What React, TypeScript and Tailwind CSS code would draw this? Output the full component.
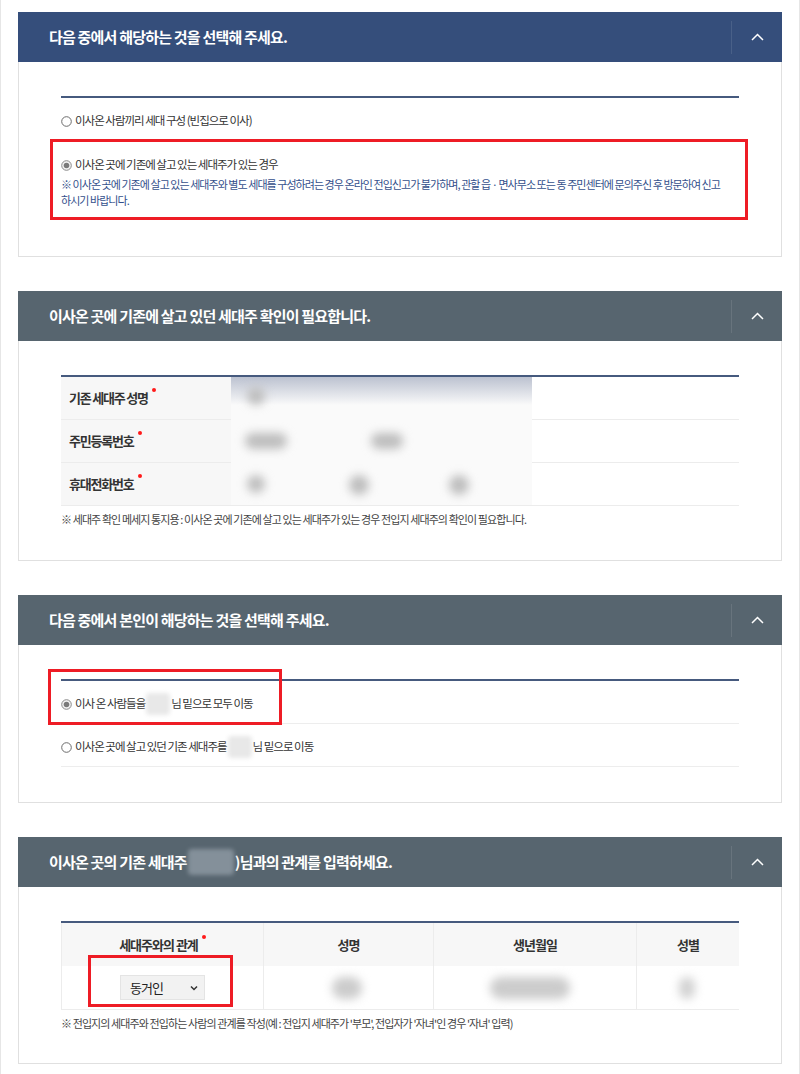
import type { ReactNode } from "react";

const NAVY = "bg-[#354e7b]";
const SLATE = "bg-[#57656f]";

function Chevron() {
  return (
    <svg width="13" height="8" viewBox="0 0 13 8" fill="none">
      <path d="M1 7L6.5 1.5L12 7" stroke="white" strokeWidth="1.5" />
    </svg>
  );
}

function Panel({
  title,
  tone,
  children,
  className = "",
}: {
  title: ReactNode;
  tone: string;
  children: ReactNode;
  className?: string;
}) {
  return (
    <section>
      <header className={`flex h-[50px] items-center ${tone}`}>
        <h2 className="flex flex-1 items-center pl-[31px] text-[15px] font-bold tracking-[-0.8px] text-white">
          {title}
        </h2>
        <div className="flex h-[33px] w-[51px] items-center justify-center border-l border-white/10">
          <Chevron />
        </div>
      </header>
      <div
        className={`relative border-x border-b border-[#e0e0e0] bg-white px-[42px] pt-[34px] ${className}`}
      >
        <div className="h-[2px] bg-[#465a7e]" />
        {children}
      </div>
    </section>
  );
}

function Radio({ checked = false }: { checked?: boolean }) {
  return (
    <svg width="11" height="11" viewBox="0 0 11 11" className="mr-[3px] shrink-0">
      <circle
        cx="5.5"
        cy="5.5"
        r="4.8"
        fill={checked ? "#f4f4f4" : "white"}
        stroke={checked ? "#8a8a8a" : "#6b6b6b"}
        strokeWidth="1"
      />
      {checked && <circle cx="5.5" cy="5.5" r="2.8" fill="#7a7a7a" />}
    </svg>
  );
}

function RedDot() {
  return (
    <span className="relative -top-[8px] ml-[4px] inline-block h-[4px] w-[4px] rounded-full bg-[#ff1a1a]" />
  );
}

function Chip({ className = "" }: { className?: string }) {
  return <span className={`inline-block rounded-sm blur-[2px] ${className}`} />;
}

function Blob({ className = "" }: { className?: string }) {
  return <span className={`absolute rounded-full bg-[#bdbdbd] blur-[5px] ${className}`} />;
}

function Annotation({ className }: { className: string }) {
  return (
    <div className={`pointer-events-none absolute border-[3px] border-[#ee1c25] ${className}`} />
  );
}

const note = "text-[11px] leading-[14px] tracking-[-0.9px] text-[#444]";
const option = "text-[11.5px] tracking-[-1px] text-[#333]";

export default function App() {
  return (
    <div className="min-h-[1074px] w-[800px] border-x border-[#e6e6e6] bg-white px-[17px] pb-[10px] pt-[12px] font-['Noto_Sans_CJK_KR','Noto_Sans',sans-serif]">
      <div className="flex flex-col gap-[34px]">
        {/* 세대 구성 선택 */}
        <Panel title="다음 중에서 해당하는 것을 선택해 주세요." tone={NAVY} className="pb-[48px]">
          <div className={`flex h-[42px] items-center pt-[4px] ${option}`}>
            <Radio />
            이사온 사람끼리 세대 구성 (빈집으로 이사)
          </div>
          <div className={`mt-[16px] flex h-[18px] items-center ${option}`}>
            <Radio checked />
            이사온 곳에 기존에 살고 있는 세대주가 있는 경우
          </div>
          <p className="mt-[2px] whitespace-nowrap text-[11px] leading-[16px] tracking-[-0.95px] text-[#34508c]">
            ※ 이사온 곳에 기존에 살고 있는 세대주와 별도 세대를 구성하려는 경우 온라인 전입신고가 불가하며, 관할 읍 · 면사무소 또는 동 주민센터에 문의주신 후 방문하여 신고
            <br />
            하시기 바랍니다.
          </p>
          <Annotation className="left-[31px] top-[77px] h-[81px] w-[698px]" />
        </Panel>

        {/* 세대주 확인 */}
        <Panel title="이사온 곳에 기존에 살고 있던 세대주 확인이 필요합니다." tone={SLATE} className="pb-[34px]">
          <div className="relative">
            {["기존 세대주 성명", "주민등록번호", "휴대전화번호"].map((label) => (
              <div key={label} className="flex h-[43px] border-b border-[#ececec]">
                <div className="flex w-[170px] items-center bg-[#f7f7f7] pl-[8px] text-[13px] font-bold tracking-[-1.2px] text-[#333]">
                  {label}
                  <RedDot />
                </div>
                <div className="flex-1" />
              </div>
            ))}
            <div className="absolute left-[170px] top-0 h-[128px] w-[301px] overflow-hidden bg-[#fafafa]">
              <div className="absolute inset-x-0 top-0 h-[28px] bg-gradient-to-b from-[#bcc2d0] to-[#fafafa]" />
              <Blob className="left-[16px] top-[10px] h-[18px] w-[18px]" />
              <Blob className="left-[14px] top-[56px] h-[16px] w-[42px]" />
              <Blob className="left-[140px] top-[56px] h-[16px] w-[32px]" />
              <Blob className="left-[16px] top-[98px] h-[18px] w-[18px]" />
              <Blob className="left-[118px] top-[98px] h-[20px] w-[20px]" />
              <Blob className="left-[218px] top-[98px] h-[20px] w-[20px]" />
            </div>
          </div>
          <p className={`mt-[6px] whitespace-nowrap ${note}`}>
            ※ 세대주 확인 메세지 통지용 : 이사온 곳에 기존에 살고 있는 세대주가 있는 경우 전입지 세대주의 확인이 필요합니다.
          </p>
        </Panel>

        {/* 본인 해당 선택 */}
        <Panel title="다음 중에서 본인이 해당하는 것을 선택해 주세요." tone={SLATE} className="pb-[35px]">
          <div className={`flex h-[43px] items-center border-b border-[#ededed] pt-[4px] ${option}`}>
            <Radio checked />
            이사 온 사람들을
            <Chip className="mx-[1px] h-[22px] w-[24px] bg-[#e8e8e8]" />
            님 밑으로 모두 이동
          </div>
          <div className={`flex h-[43px] items-center border-b border-[#ededed] pt-[4px] ${option}`}>
            <Radio />
            이사온 곳에 살고 있던 기존 세대주를
            <Chip className="mx-[1px] h-[22px] w-[24px] bg-[#e8e8e8]" />
            님 밑으로 이동
          </div>
          <Annotation className="left-[29px] top-[24px] h-[56px] w-[234px]" />
        </Panel>

        {/* 관계 입력 */}
        <Panel
          title={
            <>
              이사온 곳의 기존 세대주
              <Chip className="mx-[1px] h-[26px] w-[46px] bg-[#84909a]" />
              )님과의 관계를 입력하세요.
            </>
          }
          tone={SLATE}
          className="pb-[33px]"
        >
          <div className="grid grid-cols-[202px_170px_203px_1fr] border-b border-l border-[#ececec] text-[13px] font-bold tracking-[-1px] text-[#333]">
            {["세대주와의 관계", "성명", "생년월일", "성별"].map((h, i) => (
              <div
                key={h}
                className={`flex h-[43px] items-center justify-center bg-[#f7f7f7] ${i < 3 ? "border-r border-[#ececec]" : ""}`}
              >
                {h}
                {i === 0 && <RedDot />}
              </div>
            ))}
            <div className="flex h-[43px] items-center justify-center border-r border-[#ececec]">
              <div className="flex h-[25px] w-[85px] items-center justify-between border border-[#e4e4e4] bg-[#f2f2f2] pl-[9px] pr-[6px] text-[13px] font-normal text-[#222]">
                동거인
                <svg width="8" height="6" viewBox="0 0 8 6" fill="none">
                  <path d="M1 1.5L4 4.5L7 1.5" stroke="#333" strokeWidth="1.5" />
                </svg>
              </div>
            </div>
            <div className="relative border-r border-[#ececec]">
              <Blob className="left-[68px] top-[11px] h-[22px] w-[30px] bg-[#cccccc]" />
            </div>
            <div className="relative border-r border-[#ececec]">
              <Blob className="left-[56px] top-[11px] h-[22px] w-[80px] bg-[#cccccc]" />
            </div>
            <div className="relative">
              <Blob className="left-[42px] top-[11px] h-[22px] w-[16px] bg-[#d2d2d2]" />
            </div>
          </div>
          <p className={`mt-[6px] whitespace-nowrap ${note}`}>
            ※ 전입지의 세대주와 전입하는 사람의 관계를 작성(예 : 전입지 세대주가 '부모', 전입자가 '자녀'인 경우 '자녀' 입력)
          </p>
          <Annotation className="left-[69px] top-[68px] h-[52px] w-[145px]" />
        </Panel>
      </div>
    </div>
  );
}
